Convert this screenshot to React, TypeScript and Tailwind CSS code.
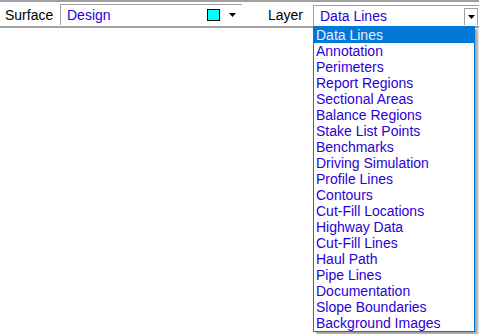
import { useState } from 'react';

const layers = [
  'Data Lines',
  'Annotation',
  'Perimeters',
  'Report Regions',
  'Sectional Areas',
  'Balance Regions',
  'Stake List Points',
  'Benchmarks',
  'Driving Simulation',
  'Profile Lines',
  'Contours',
  'Cut-Fill Locations',
  'Highway Data',
  'Cut-Fill Lines',
  'Haul Path',
  'Pipe Lines',
  'Documentation',
  'Slope Boundaries',
  'Background Images',
];

const Arrow = () => (
  <svg width="7" height="4" viewBox="0 0 7 4" className="block">
    <path d="M0 0h7L3.5 4z" fill="#000" />
  </svg>
);

export default function App() {
  const [layer, setLayer] = useState('Data Lines');

  return (
    <div className="relative h-[334px] w-[479px] overflow-hidden bg-white font-['Liberation_Sans',Arial,sans-serif] text-[14px]">
      <div className="flex h-[28px] items-start border-t-2 border-b-2 border-[#a0a0a0] bg-white">
        <span className="ml-[5px] mt-[3px] w-[47px] whitespace-nowrap text-black">Surface</span>
        <div className="ml-[8px] mt-[2px] flex h-[21px] w-[182px] items-center border-l border-t border-[#a0a0a0] pl-[6px]">
          <span className="text-[#2a00d8]">Design</span>
          <span className="ml-auto h-[12px] w-[13px] border border-black bg-[#00ffff]" />
          <span className="ml-[9px] mr-[6px]">
            <Arrow />
          </span>
        </div>
        <span className="ml-[26px] mt-[3px] w-[37px] whitespace-nowrap text-black">Layer</span>
        <div className="ml-[8px] mt-[3px] flex h-[21px] flex-1 items-center border-l border-t border-[#a0a0a0] pl-[6px]">
          <span className="text-[#2a00d8]">{layer}</span>
          <span className="ml-auto mr-[1px] mt-[2px] flex h-[17px] w-[14px] items-center justify-center self-start border-l border-t border-r border-[#a0a0a0]">
            <Arrow />
          </span>
        </div>
      </div>

      <ul className="absolute left-[313px] top-[26px] w-[162px] border border-[#0078d7] bg-white shadow-[3px_3px_2px_rgba(0,0,0,0.35)]">
        {layers.map((name) => (
          <li
            key={name}
            onClick={() => setLayer(name)}
            className={
              name === layer
                ? 'h-[16px] bg-[#0078d7] pl-[2px] leading-[16px] text-[#f0eeff]'
                : 'h-[16px] pl-[2px] leading-[16px] text-[#2a00d8]'
            }
          >
            {name}
          </li>
        ))}
      </ul>
    </div>
  );
}
